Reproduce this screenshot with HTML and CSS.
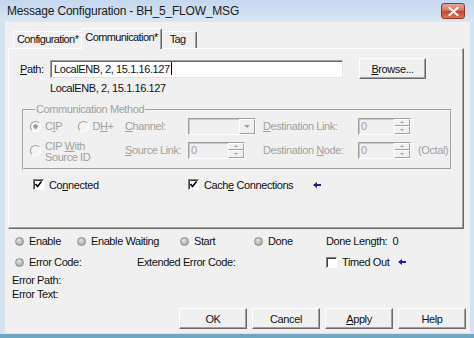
FILE: index.html
```html
<!DOCTYPE html>
<html lang="en">
<head>
  <meta charset="UTF-8" />
  <meta name="viewport" content="width=device-width, initial-scale=1.0" />
  <title>Message Configuration - BH_5_FLOW_MSG</title>
  <link rel="stylesheet" href="styles.css">
</head>
<body>
  <div class="window">
    <div class="titlebar">
      <span class="title">Message Configuration - BH_5_FLOW_MSG</span>
      <div class="close-btn">
        <svg width="11" height="9" viewBox="0 0 11 9"><path d="M1.5 1 L9.5 8 M9.5 1 L1.5 8" stroke="#fff" stroke-width="2.2" stroke-linecap="round"/></svg>
      </div>
    </div>

    <div class="client">
      <div class="tabs">
        <div class="tab">Configuration*</div>
        <div class="tab active">Communication*</div>
        <div class="tab tag-tab">Tag</div>
      </div>

      <div class="panel">
        <div class="path-row">
          <span class="path-label"><u>P</u>ath:</span>
          <div class="textbox">LocalENB, 2, 15.1.16.127<span class="caret"></span></div>
          <div class="btn browse-btn"><u>B</u>rowse...</div>
        </div>
        <div class="path-resolved">LocalENB, 2, 15.1.16.127</div>

        <fieldset class="method">
          <legend>Communication Method</legend>
          <div class="method-grid">
            <div class="radios">
              <span class="radio-item"><span class="radio checked"></span><span>C<u>I</u>P</span></span>
              <span class="radio-item"><span class="radio"></span><span>D<u>H</u>+</span></span>
            </div>
            <span><span><u>C</u>hannel:</span></span>
            <span><span class="combo"><span class="combo-btn"><span class="tri-down"></span></span></span></span>
            <span><span><u>D</u>estination Link:</span></span>
            <span>
              <span class="spin"><span class="spin-val">0</span><span class="spin-btns"><span><i class="tri-up"></i></span><span><i class="tri-down small"></i></span></span></span>
            </span>
            <span></span>

            <div class="radio-item two-line"><span class="radio"></span><span class="two-line-text">CIP <u>W</u>ith<br>Source ID</span></div>
            <span><span><u>S</u>ource Link:</span></span>
            <span>
              <span class="spin wide"><span class="spin-val">0</span><span class="spin-btns"><span><i class="tri-up"></i></span><span><i class="tri-down small"></i></span></span></span>
            </span>
            <span><span>Destination <u>N</u>ode:</span></span>
            <span>
              <span class="spin"><span class="spin-val">0</span><span class="spin-btns"><span><i class="tri-up"></i></span><span><i class="tri-down small"></i></span></span></span>
            </span>
            <span>(Octal)</span>
          </div>
        </fieldset>

        <div class="checks">
          <span class="check-item connected">
            <span class="checkbox"><svg width="9" height="9" viewBox="0 0 9 9"><path d="M1.5 4 L3.5 6.5 L7.5 1.5" fill="none" stroke="#000" stroke-width="1.6"/></svg></span>
            <span>Co<u>n</u>nected</span>
          </span>
          <span class="check-item">
            <span class="checkbox"><svg width="9" height="9" viewBox="0 0 9 9"><path d="M1.5 4 L3.5 6.5 L7.5 1.5" fill="none" stroke="#000" stroke-width="1.6"/></svg></span>
            <span>Cach<u>e</u> Connections</span>
          </span>
          <svg class="arrow cache-arrow" width="8" height="6" viewBox="0 0 8 6"><path d="M0 3 L4 0 L4 2 L8 2 L8 4 L4 4 L4 6 Z" fill="#1f1f9c"/></svg>
        </div>
      </div>

      <div class="status">
        <div class="status-row">
          <span class="led-item w-enable"><span class="led"></span>Enable</span>
          <span class="led-item w-waiting"><span class="led"></span>Enable Waiting</span>
          <span class="led-item w-start"><span class="led"></span>Start</span>
          <span class="led-item w-done"><span class="led"></span>Done</span>
          <span>Done Length:&nbsp; 0</span>
        </div>
        <div class="status-row second">
          <span class="led-item w-error"><span class="led"></span>Error Code:</span>
          <span class="w-extended">Extended Error Code:</span>
          <span class="check-item">
            <span class="checkbox"></span>
            <span>Timed Out</span>
            <svg class="arrow" width="8" height="6" viewBox="0 0 8 6"><path d="M0 3 L4 0 L4 2 L8 2 L8 4 L4 4 L4 6 Z" fill="#1f1f9c"/></svg>
          </span>
        </div>
        <div class="error-line first">Error Path:</div>
        <div class="error-line">Error Text:</div>
      </div>

      <div class="buttons">
        <div class="btn">OK</div>
        <div class="btn">Cancel</div>
        <div class="btn"><u>A</u>pply</div>
        <div class="btn">Help</div>
      </div>
    </div>
  </div>
</body>
</html>
```

FILE: styles.css
```css
* {
  box-sizing: border-box;
}

body {
  margin: 0;
  font-family: "Liberation Sans", Arial, sans-serif;
  font-size: 11px;
  letter-spacing: -0.4px;
  color: #111;
  overflow: hidden;
}

.window {
  width: 474px;
  height: 338px;
  display: flex;
  flex-direction: column;
  background: #d4e2f2;
  border-bottom: 4px solid #6da7c2;
}

.titlebar {
  height: 22px;
  flex-shrink: 0;
  display: flex;
  align-items: center;
  justify-content: space-between;
  padding: 0 9px 0 7px;
  background: linear-gradient(#c4d7ee, #d9e6f4);
}

.title {
  font-size: 12px;
  letter-spacing: -0.2px;
  color: #1b1b1b;
}

.close-btn {
  width: 24px;
  height: 16px;
  border: 1px solid #8b3a2c;
  border-radius: 3px;
  background: linear-gradient(#e8a898, #d66c52 50%, #c8452c 51%, #d8765a);
  display: flex;
  align-items: center;
  justify-content: center;
}

.client {
  flex: 1;
  margin: 0 4px 1px 5px;
  background: #f0f0f0;
  display: flex;
  flex-direction: column;
}

/* tabs */
.tabs {
  display: flex;
  align-items: flex-end;
  height: 20px;
  margin-top: 6px;
  padding-left: 8px;
}

.tab {
  height: 17px;
  padding: 0 4px 0 3px;
  line-height: 15px;
  letter-spacing: -0.6px;
  background: #f0f0f0;
  border: 1px solid;
  border-bottom: none;
  border-color: #fff #696969 transparent #fff;
  box-shadow: inset -1px 0 #a0a0a0;
  border-radius: 2px 2px 0 0;
}

.tab.active {
  position: relative;
  z-index: 1;
  height: 21px;
  margin: 0 -2px -1px;
  padding: 0 3px;
  line-height: 17px;
}

.tab.tag-tab {
  padding: 0 10px 0 9px;
}

.panel {
  margin-left: 3px;
  width: 456px;
  height: 181px;
  border: 1px solid;
  border-color: #fff #696969 #696969 #fff;
  box-shadow: inset -1px -1px #a0a0a0;
}

/* path */
.path-row {
  display: flex;
  align-items: center;
  height: 21px;
  margin-top: 9px;
}

.path-label {
  width: 30px;
  margin-left: 11px;
}

.textbox {
  width: 293px;
  height: 18px;
  padding-left: 3px;
  display: flex;
  align-items: center;
  background: #fff;
  border: 1px solid;
  border-color: #a0a0a0 #e3e3e3 #e3e3e3 #a0a0a0;
  box-shadow: inset 1px 1px #696969;
}

.caret {
  width: 1px;
  height: 13px;
  margin-left: 1px;
  background: #000;
}

.btn {
  height: 21px;
  display: flex;
  align-items: center;
  justify-content: center;
  background: #f0f0f0;
  border: 1px solid;
  border-color: #fff #696969 #696969 #fff;
  box-shadow: inset -1px -1px #a0a0a0;
}

.browse-btn {
  width: 67px;
  margin-left: 16px;
}

.path-resolved {
  margin: 3px 0 0 41px;
  line-height: 13px;
}

/* communication method group */
.method {
  margin: 8px 0 0 13px;
  width: 430px;
  min-width: 0;
  padding: 0 0 8px 6px;
  border: 2px groove #f4f4f4;
}

.method legend {
  margin-left: 5px;
  padding: 0 1px;
  line-height: 13px;
  color: #a0a0a0;
}

.method-grid {
  display: grid;
  grid-template-columns: 95px 63px 75px 95px 60px auto;
  grid-template-rows: 20px 20px;
  row-gap: 4px;
  align-items: center;
  color: #a0a0a0;
}

.method-grid > span {
  display: flex;
  align-items: center;
}

.radios {
  display: flex;
}

.radio-item {
  display: flex;
  align-items: center;
  gap: 4px;
  width: 49px;
}

.radio-item.two-line {
  width: auto;
}

.two-line-text {
  line-height: 11px;
  margin-top: 3px;
}

.radio {
  width: 11px;
  height: 11px;
  flex-shrink: 0;
  border-radius: 50%;
  border: 1px solid;
  border-color: #a0a0a0 #fff #fff #a0a0a0;
  background: #f4f4f4;
}

.radio.checked {
  background: radial-gradient(circle, #a0a0a0 2px, #f4f4f4 2.5px);
}

.combo,
.spin {
  height: 17px;
  display: flex;
  background: #f0f0f0;
  border: 1px solid;
  border-color: #a0a0a0 #fff #fff #a0a0a0;
  box-shadow: inset 1px 1px #c8c8c8;
}

.combo {
  width: 68px;
  justify-content: flex-end;
}

.combo-btn {
  width: 16px;
  height: 100%;
  display: flex;
  align-items: center;
  justify-content: center;
  border: 1px solid;
  border-color: #fff #a0a0a0 #a0a0a0 #fff;
}

.tri-down {
  width: 0;
  height: 0;
  border-left: 3px solid transparent;
  border-right: 3px solid transparent;
  border-top: 3px solid #a0a0a0;
}

.tri-up {
  width: 0;
  height: 0;
  border-left: 2px solid transparent;
  border-right: 2px solid transparent;
  border-bottom: 2px solid #a0a0a0;
}

.tri-down.small {
  border-width: 2px 2px 0;
}

.spin {
  width: 53px;
}

.spin.wide {
  width: 57px;
}

.spin-val {
  flex: 1;
  padding-left: 2px;
  line-height: 15px;
}

.spin-btns {
  width: 16px;
  display: flex;
  flex-direction: column;
}

.spin-btns span {
  flex: 1;
  display: flex;
  align-items: center;
  justify-content: center;
  border: 1px solid;
  border-color: #fff #a0a0a0 #a0a0a0 #fff;
}

/* checkboxes */
.checks {
  display: flex;
  align-items: center;
  height: 13px;
  margin: 8px 0 0 24px;
}

.check-item {
  display: flex;
  align-items: center;
  gap: 5px;
}

.check-item.connected {
  width: 155px;
}

.checkbox {
  width: 11px;
  height: 11px;
  flex-shrink: 0;
  display: flex;
  align-items: center;
  justify-content: center;
  background: #fff;
  border: 1px solid;
  border-color: #808080 #fff #fff #808080;
  box-shadow: inset 1px 1px #404040;
}

.arrow {
  margin-left: 4px;
}

.cache-arrow {
  margin-left: 20px;
}

/* status area */
.status {
  margin-top: 5px;
  padding-left: 7px;
}

.status-row {
  display: flex;
  align-items: center;
  height: 14px;
  padding-left: 3px;
}

.status-row.second {
  margin-top: 7px;
}

.led-item {
  display: flex;
  align-items: center;
  gap: 5px;
}

.led {
  width: 9px;
  height: 9px;
  border-radius: 50%;
  border: 1px solid #8c8c8c;
  background: radial-gradient(circle at 40% 35%, #e6e6e6, #a9a9a9 75%);
}

.w-enable { width: 62px; }
.w-waiting { width: 103px; }
.w-start { width: 74px; }
.w-done { width: 72px; }
.w-error { width: 122px; }
.w-extended { width: 189px; }

.error-line {
  line-height: 14px;
}

.error-line.first {
  margin-top: 4px;
}

.buttons {
  display: flex;
  justify-content: flex-end;
  gap: 5px;
  margin-top: 7px;
  padding-right: 4px;
}

.buttons .btn {
  width: 68px;
}
```
